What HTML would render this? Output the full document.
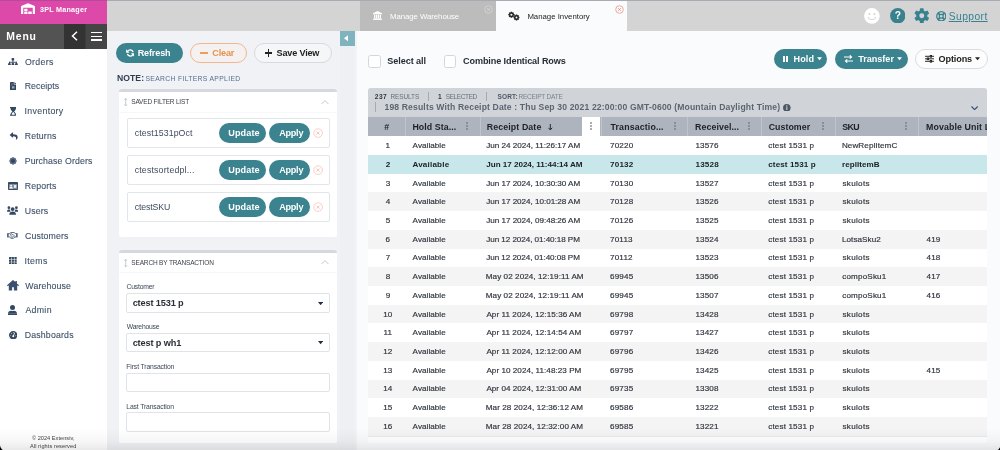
<!DOCTYPE html>
<html><head><meta charset="utf-8"><title>3PL Manager</title>
<style>
*{box-sizing:border-box;margin:0;padding:0}
html,body{width:1000px;height:450px;overflow:hidden;background:#fafbfc;font-family:"Liberation Sans",sans-serif;color:#3e4c5e}
body{position:relative}
#app{position:absolute;left:0;top:0;width:1000px;height:450px;overflow:hidden;will-change:transform;transform:translateZ(0)}
.abs,.abs-c>*{position:absolute}
div.abs{display:block}
.pill{position:absolute;border-radius:10px}
.teal{background:#3a838f}
.panel{position:absolute;left:119.4px;width:217.2px;background:#fff;border-top:3px solid #d5d9df;border-radius:3px 3px 2px 2px}
.card{position:absolute;left:127px;width:202.6px;height:30px;border:1px solid #e2e5e9;border-radius:2px;background:#fff}
.inp{position:absolute;left:126.4px;width:203.2px;height:19.4px;border:1px solid #e0e3e7;border-radius:2px;background:#fff}
.cb{position:absolute;top:55.3px;width:12.5px;height:12.5px;border:1px solid #d3d6db;border-radius:2.5px;background:#fff}
.row{position:absolute;left:368px;width:618.6px;height:18.71px}
.hs{position:absolute;top:117px;width:1px;height:19.3px;background:#bec5ce}
</style></head><body>
<div id="app">
<div class="abs" style="left:107px;top:0px;width:893px;height:30.7px;background:#d4d4d4;border-top:1px solid #a6abb2"></div>
<div class="abs" style="left:359.8px;top:1px;width:136.4px;height:29.7px;background:#bcbcbc;"></div>
<svg class="abs" style="left:373px;top:11.2px;width:9px;height:9px" viewBox="0 0 22 22"><g fill="#fff"><path d="M11 0L0 5.500V8h22V5.500z"/><rect x="2.500" y="9" width="3.200" height="8"/><rect x="7.200" y="9" width="3.200" height="8"/><rect x="11.700" y="9" width="3.200" height="8"/><rect x="16.300" y="9" width="3.200" height="8"/><rect x="1.500" y="17.500" width="19" height="1.800"/><rect x="0" y="19.800" width="22" height="2.200"/></g></svg>
<div class="abs" style="left:390.08px;top:13.00px;font-size:7.8px;line-height:1;letter-spacing:-0.059px;color:#fff;white-space:nowrap;">Manage Warehouse</div>
<svg class="abs" style="left:484.0px;top:4.800000000000001px;width:9.0px;height:9.0px" viewBox="0 0 18 18"><circle cx="9" cy="9" r="7.600" fill="none" stroke="#dcdcdc" stroke-width="1.300"/><path d="M6.300 6.300l5.400 5.400M11.700 6.300l-5.400 5.400" stroke="#dcdcdc" stroke-width="1.500"/></svg>
<div class="abs" style="left:496.2px;top:1px;width:130.6px;height:30px;background:#fafbfc;"></div>
<svg class="abs" style="left:508px;top:10.5px;width:12px;height:10px" viewBox="0 0 24 20"><g fill="#222"><circle cx="6.8" cy="7.5" r="4.44"/><rect x="5.18" y="1.50" width="3.24" height="12.00" rx="0.48" transform="rotate(0 6.8 7.5)"/><rect x="5.18" y="1.50" width="3.24" height="12.00" rx="0.48" transform="rotate(45 6.8 7.5)"/><rect x="5.18" y="1.50" width="3.24" height="12.00" rx="0.48" transform="rotate(90 6.8 7.5)"/><rect x="5.18" y="1.50" width="3.24" height="12.00" rx="0.48" transform="rotate(135 6.8 7.5)"/></g><circle cx="6.8" cy="7.5" r="2.1" fill="#fafbfc"/><g fill="#222"><circle cx="17" cy="13" r="4.29"/><rect x="15.43" y="7.20" width="3.13" height="11.60" rx="0.46" transform="rotate(0 17 13)"/><rect x="15.43" y="7.20" width="3.13" height="11.60" rx="0.46" transform="rotate(45 17 13)"/><rect x="15.43" y="7.20" width="3.13" height="11.60" rx="0.46" transform="rotate(90 17 13)"/><rect x="15.43" y="7.20" width="3.13" height="11.60" rx="0.46" transform="rotate(135 17 13)"/></g><circle cx="17" cy="13" r="2" fill="#fafbfc"/></svg>
<div class="abs" style="left:527.38px;top:13.00px;font-size:7.8px;line-height:1;letter-spacing:-0.004px;color:#222;white-space:nowrap;">Manage Inventory</div>
<svg class="abs" style="left:615.25px;top:4.800000000000001px;width:9.0px;height:9.0px" viewBox="0 0 18 18"><circle cx="9" cy="9" r="7.600" fill="none" stroke="#e2806f" stroke-width="1.300"/><path d="M6.300 6.300l5.400 5.400M11.700 6.300l-5.400 5.400" stroke="#e2806f" stroke-width="1.500"/></svg>
<svg class="abs" style="left:863.9px;top:7.9px;width:15.8px;height:15.8px" viewBox="0 0 32 32"><circle cx="16" cy="16" r="15.800" fill="#fff"/><circle cx="10.800" cy="12.300" r="2" fill="#d6d6d6"/><circle cx="21.200" cy="12.300" r="2" fill="#d6d6d6"/><path d="M8.500 19c3 5.800 12 5.800 15 0" fill="none" stroke="#d6d6d6" stroke-width="2.200" stroke-linecap="round"/></svg>
<svg class="abs" style="left:889.5px;top:7.5px;width:15.6px;height:15.6px" viewBox="0 0 32 32"><circle cx="16" cy="16" r="15.800" fill="#37828e"/><text x="16" y="23.300" text-anchor="middle" font-family="Liberation Sans, sans-serif" font-weight="bold" font-size="21" fill="#fff">?</text></svg>
<svg class="abs" style="left:913.9px;top:7.5px;width:15.6px;height:15.6px" viewBox="0 0 32 32"><g fill="#37828e"><circle cx="16" cy="16" r="11.500"/><rect x="12" y="0.600" width="8" height="30.800" rx="1.600"/><rect x="12" y="0.600" width="8" height="30.800" rx="1.600" transform="rotate(60 16 16)"/><rect x="12" y="0.600" width="8" height="30.800" rx="1.600" transform="rotate(120 16 16)"/></g><circle cx="16" cy="16" r="5.100" fill="#d4d4d4"/></svg>
<svg class="abs" style="left:935.6px;top:10.7px;width:10.5px;height:10.5px" viewBox="0 0 20 20"><circle cx="10" cy="10" r="8.600" fill="none" stroke="#37828e" stroke-width="2.400"/><circle cx="10" cy="10" r="3.700" fill="none" stroke="#37828e" stroke-width="2.200"/><path d="M3.600 3.600l3.800 3.800M16.400 3.600l-3.800 3.800M3.600 16.400l3.800-3.800M16.400 16.400l-3.800-3.800" stroke="#37828e" stroke-width="3.400"/></svg>
<div class="abs" style="left:948.74px;top:12.00px;font-size:10.3px;line-height:1;letter-spacing:0.411px;color:#37828e;white-space:nowrap;text-decoration:underline;text-decoration-thickness:.8px;text-underline-offset:1px;">Support</div>
<div class="abs" style="left:0px;top:0px;width:107px;height:450px;background:#fff;"></div>
<div class="abs" style="left:0px;top:0px;width:106.7px;height:24px;background:#dc49a9;border-top:1px solid #b24c98"></div>
<svg class="abs" style="left:20.8px;top:3.4px;width:14px;height:11px" viewBox="0 0 28 22"><path fill="#fff" d="M14 0.500L1.500 5.500C.6 5.900 0 6.700 0 7.700V22h4.500V9.500h19V22H28V7.700c0-1-.6-1.800-1.500-2.200z"/><g fill="#fff"><rect x="6.500" y="11.500" width="6.500" height="4.500" rx=".6"/><rect x="6.500" y="17" width="6.500" height="5" rx=".6"/><rect x="14.500" y="17" width="7" height="5" rx=".6"/></g></svg>
<div class="abs" style="left:40.01px;top:6.00px;font-size:7.2px;line-height:1;letter-spacing:0.238px;color:#fff;white-space:nowrap;font-weight:bold;">3PL Manager</div>
<div class="abs" style="left:0px;top:24px;width:106.7px;height:24.6px;background:#535353;"></div>
<div class="abs" style="left:6.22px;top:32.00px;font-size:10.4px;line-height:1;letter-spacing:0.869px;color:#fff;white-space:nowrap;font-weight:bold;">Menu</div>
<div class="abs" style="left:64px;top:24px;width:21px;height:24.6px;background:#333;"></div>
<svg class="abs" style="left:70.6px;top:31.2px;width:7px;height:10px" viewBox="0 0 14 20"><path d="M12 1.500L3 10l9 8.500" fill="none" stroke="#fff" stroke-width="3"/></svg>
<div class="abs" style="left:85px;top:24px;width:21.7px;height:24.6px;background:#454545;border-left:1px solid #3b3b3b"></div>
<div class="abs" style="left:91.1px;top:31.8px;width:10.6px;height:1.4px;background:#fff;"></div>
<div class="abs" style="left:91.1px;top:35.6px;width:10.6px;height:1.4px;background:#fff;"></div>
<div class="abs" style="left:91.1px;top:39.3px;width:10.6px;height:1.4px;background:#fff;"></div>
<div class="abs" style="left:25.01px;top:58.00px;font-size:8.75px;line-height:1;letter-spacing:0.314px;color:#3d5068;white-space:nowrap;-webkit-text-stroke:.1px;">Orders</div>
<div class="abs" style="left:24.70px;top:82.00px;font-size:8.75px;line-height:1;letter-spacing:0.053px;color:#3d5068;white-space:nowrap;-webkit-text-stroke:.1px;">Receipts</div>
<div class="abs" style="left:24.61px;top:107.00px;font-size:8.75px;line-height:1;letter-spacing:0.323px;color:#3d5068;white-space:nowrap;-webkit-text-stroke:.1px;">Inventory</div>
<div class="abs" style="left:24.70px;top:132.00px;font-size:8.75px;line-height:1;letter-spacing:0.164px;color:#3d5068;white-space:nowrap;-webkit-text-stroke:.1px;">Returns</div>
<div class="abs" style="left:24.70px;top:157.00px;font-size:8.75px;line-height:1;letter-spacing:0.104px;color:#3d5068;white-space:nowrap;-webkit-text-stroke:.1px;">Purchase Orders</div>
<div class="abs" style="left:24.70px;top:182.00px;font-size:8.75px;line-height:1;letter-spacing:0.164px;color:#3d5068;white-space:nowrap;-webkit-text-stroke:.1px;">Reports</div>
<div class="abs" style="left:24.74px;top:207.00px;font-size:8.75px;line-height:1;letter-spacing:0.131px;color:#3d5068;white-space:nowrap;-webkit-text-stroke:.1px;">Users</div>
<div class="abs" style="left:24.96px;top:232.00px;font-size:8.75px;line-height:1;letter-spacing:0.155px;color:#3d5068;white-space:nowrap;-webkit-text-stroke:.1px;">Customers</div>
<div class="abs" style="left:24.61px;top:257.00px;font-size:8.75px;line-height:1;letter-spacing:0.325px;color:#3d5068;white-space:nowrap;-webkit-text-stroke:.1px;">Items</div>
<div class="abs" style="left:25.36px;top:282.00px;font-size:8.75px;line-height:1;letter-spacing:0.148px;color:#3d5068;white-space:nowrap;-webkit-text-stroke:.1px;">Warehouse</div>
<div class="abs" style="left:25.40px;top:306.00px;font-size:8.75px;line-height:1;letter-spacing:0.330px;color:#3d5068;white-space:nowrap;-webkit-text-stroke:.1px;">Admin</div>
<div class="abs" style="left:24.70px;top:331.00px;font-size:8.75px;line-height:1;letter-spacing:0.183px;color:#3d5068;white-space:nowrap;-webkit-text-stroke:.1px;">Dashboards</div>
<svg class="abs" style="left:8px;top:57.6px;width:9.8px;height:7.7px" viewBox="0 0 9.800 7.700"><g fill="#33475f"><rect x="3.600" y="0" width="2.600" height="2.600" rx=".7"/><circle cx="1.400" cy="6.300" r="1.400"/><circle cx="4.900" cy="6.300" r="1.400"/><circle cx="8.400" cy="6.300" r="1.400"/><rect x="4.450" y="2" width=".9" height="4"/><rect x=".95" y="3.800" width="7.900" height=".9"/><rect x=".95" y="3.800" width=".9" height="2"/><rect x="7.950" y="3.800" width=".9" height="2"/></g></svg>
<svg class="abs" style="left:9.6px;top:82px;width:6.4px;height:8.4px" viewBox="0 0 6.400 8.400"><path fill="#33475f" d="M0 .8A.8.8 0 0 1 .8 0H3.800V2.600H6.400V7.600A.8.8 0 0 1 5.600 8.400H.8A.8.8 0 0 1 0 7.600z M4.400 0L6.400 2H4.400z"/><rect x="1.900" y="4.300" width="2.600" height="2.200" fill="#9ca7b5"/><rect x="1.200" y="1.600" width="1.600" height=".6" fill="#8492a3"/><rect x="1.200" y="2.800" width="1.600" height=".6" fill="#8492a3"/></svg>
<svg class="abs" style="left:9.5px;top:107px;width:6.5px;height:8.8px" viewBox="0 0 6.500 8.800"><path fill="#33475f" d="M0 0h6.500v1.100h-.5c0 1.500-.9 2.500-1.900 3.300 1 .8 1.900 1.800 1.900 3.300h.5v1.100H0v-1.100h.5c0-1.500.9-2.500 1.900-3.300C1.400 3.600.5 2.600.5 1.100H0z"/><path fill="#fff" d="M1.700 7.700c0-1.100.7-1.900 1.550-2.600.85.700 1.550 1.500 1.550 2.600z"/></svg>
<svg class="abs" style="left:8.5px;top:131.9px;width:9.2px;height:8.2px" viewBox="0 0 512 512"><path fill="#33475f" d="M8.309 189.836L184.313 37.851C199.719 24.546 224 35.347 224 56.015v80.053c160.629 1.839 288 34.032 288 186.258 0 61.441-39.581 122.309-83.333 154.132-13.653 9.931-33.111-2.533-28.077-18.631 45.344-145.012-21.507-183.510-176.590-185.742V320c0 20.700-24.300 31.453-39.687 18.164l-176.004-152c-11.071-9.562-11.086-26.753 0-36.328z"/></svg>
<svg class="abs" style="left:8.8px;top:157px;width:8px;height:7.9px" viewBox="0 0 8 8"><polygon fill="#5d6e86" points="4.00,0.00 5.32,0.81 6.83,1.17 7.19,2.68 8.00,4.00 7.19,5.32 6.83,6.83 5.32,7.19 4.00,8.00 2.68,7.19 1.17,6.83 0.81,5.32 0.00,4.00 0.81,2.68 1.17,1.17 2.68,0.81"/><circle cx="4" cy="4" r="2" fill="#33475f"/></svg>
<svg class="abs" style="left:8px;top:181.8px;width:10px;height:8px" viewBox="0 0 10 8"><rect x="0" y="0" width="10" height="8" rx=".9" fill="#33475f"/><rect x=".9" y="2" width="8.200" height="5.100" fill="#7d8b9e"/><g fill="#fff"><circle cx="3.100" cy="3.700" r=".95"/><path d="M1.400 6.400c0-1.100.7-1.500 1.700-1.500s1.700.4 1.700 1.500z"/><rect x="5.900" y="3" width="2.400" height="2.900" fill="#e8ebef"/></g></svg>
<svg class="abs" style="left:7.2px;top:206px;width:11.3px;height:8.8px" viewBox="0 0 11.300 8.800"><g fill="#33475f"><circle cx="5.650" cy="3.100" r="1.900"/><path d="M2.300 8.800c0-2.400 1.400-3.300 3.350-3.300s3.350.9 3.350 3.300z"/><circle cx="1.900" cy="1.700" r="1.350"/><circle cx="9.400" cy="1.700" r="1.350"/><path d="M0 5.800c0-1.700.9-2.300 2-2.300.5 0 .9.100 1.300.4-.3.900.1 1.500.5 1.900z"/><path d="M11.300 5.800c0-1.700-.9-2.300-2-2.300-.5 0-.9.100-1.300.4.300.9-.1 1.500-.5 1.900z"/></g></svg>
<svg class="abs" style="left:7.2px;top:232.2px;width:10.8px;height:6.8px" viewBox="0 0 10.800 6.800"><g fill="none" stroke="#4a5c77" stroke-width=".9" stroke-linejoin="round"><path d="M1.500 1.500h1.300l1.200-1h3l1.300 1h1.200M1.500 5h1l1.500 1.300h2.400l1.500-1.300h1.200"/><path d="M4.500 1.200l-1.300 1.500c.5.800 1.400.600 1.900-.1h1.100l2 2.100M3.600 4.300c.8 1 2.200 1.100 3.100.2"/></g><rect x=".2" y="1.200" width="1.400" height="4.200" fill="#33475f"/><rect x="9.200" y="1.200" width="1.400" height="4.200" fill="#33475f"/></svg>
<svg class="abs" style="left:9px;top:256.8px;width:7.8px;height:7.3px" viewBox="0 0 7.800 7.300"><g fill="#33475f"><rect x="0.00" y="0.00" width="2.200" height="2.050" rx=".25"/><rect x="0.00" y="2.60" width="2.200" height="2.050" rx=".25"/><rect x="0.00" y="5.20" width="2.200" height="2.050" rx=".25"/><rect x="2.75" y="0.00" width="2.200" height="2.050" rx=".25"/><rect x="2.75" y="2.60" width="2.200" height="2.050" rx=".25"/><rect x="2.75" y="5.20" width="2.200" height="2.050" rx=".25"/><rect x="5.50" y="0.00" width="2.200" height="2.050" rx=".25"/><rect x="5.50" y="2.60" width="2.200" height="2.050" rx=".25"/><rect x="5.50" y="5.20" width="2.200" height="2.050" rx=".25"/></g></svg>
<svg class="abs" style="left:6.8px;top:280px;width:12px;height:10.5px" viewBox="0 0 12 10.500"><path fill="#3b4f6e" d="M6 0L0 5.200l.8.950 1-.85V10.500h3.300V7.200h1.800v3.300h3.300V5.300l1 .85.800-.95L9.900 3.400V.9H8.400v1.200z"/></svg>
<svg class="abs" style="left:8.2px;top:304.8px;width:9px;height:10px" viewBox="0 0 9 10"><g fill="#33475f"><circle cx="4.500" cy="2.500" r="2.500"/><path d="M0 10v-1.300c0-1.700 1.300-3 3-3h.4c.7.350 1.500.350 2.200 0H6c1.700 0 3 1.300 3 3V10z"/></g><rect x="0" y="8.300" width="9" height=".5" fill="#7d8b9e"/></svg>
<svg class="abs" style="left:8.5px;top:330.8px;width:8.5px;height:8.4px" viewBox="0 0 8.500 8.500"><circle cx="4.250" cy="4.250" r="4.250" fill="#33475f"/><g fill="#fff"><circle cx="4.250" cy="5.300" r="1"/><path d="M3.800 5.200l1.500-3.600.7.300-1.400 3.600z"/><circle cx="1.700" cy="4.700" r=".5"/><circle cx="2.400" cy="2.500" r=".5"/><circle cx="4.250" cy="1.600" r=".5"/><circle cx="6.800" cy="4.700" r=".5"/></g></svg>
<div class="abs" style="left:31.92px;top:436.00px;font-size:5.6px;line-height:1;letter-spacing:0.039px;color:#3f3f3f;white-space:nowrap;">© 2024 Extensiv,</div>
<div class="abs" style="left:30.00px;top:444.00px;font-size:5.6px;line-height:1;letter-spacing:0.085px;color:#3f3f3f;white-space:nowrap;">All rights reserved</div>
<div class="abs" style="left:107px;top:30.7px;width:233px;height:420px;background:#f0f2f5;"></div>
<div class="abs" style="left:340px;top:30.7px;width:15px;height:420px;background:#eef0f3;"></div>
<div class="abs" style="left:340px;top:30.7px;width:15px;height:15.5px;background:#7fb4be;"></div>
<svg class="abs" style="left:344.3px;top:35.3px;width:4.2px;height:6.6px" viewBox="0 0 4 6"><path d="M4 0v6L0 3z" fill="#fff"/></svg>
<div class="pill teal" style="left:116px;top:43.100px;width:67px;height:19.800px"></div>
<svg class="abs" style="left:125.5px;top:49px;width:8.5px;height:8px" viewBox="0 0 17 16"><g fill="none" stroke="#fff" stroke-width="2.900"><path d="M14.200 6.200A6 6 0 0 0 3.600 4.200"/><path d="M2.800 9.800A6 6 0 0 0 13.400 11.800"/></g><path d="M0.300 0.300v7h7z" fill="#fff"/><path d="M16.700 15.700v-7h-7z" fill="#fff"/></svg>
<div class="abs" style="left:137.66px;top:49.00px;font-size:9.1px;line-height:1;letter-spacing:-0.152px;color:#fff;white-space:nowrap;font-weight:bold;">Refresh</div>
<div class="pill" style="left:190.200px;top:43.100px;width:57.200px;height:19.800px;border:1px solid #f0b78c;background:#f4f1f0"></div>
<div class="abs" style="left:200.2px;top:52.3px;width:7.8px;height:1.4px;background:#ec9c5c;"></div>
<div class="abs" style="left:212.34px;top:49.00px;font-size:9.1px;line-height:1;letter-spacing:-0.175px;color:#e8924d;white-space:nowrap;font-weight:bold;">Clear</div>
<div class="pill" style="left:254.400px;top:43.100px;width:77.500px;height:19.800px;border:1px solid #d6d9dd;background:#f5f6f8"></div>
<div class="abs" style="left:264.9px;top:52.4px;width:7.3px;height:1.4px;background:#222;"></div>
<div class="abs" style="left:267.85px;top:49.4px;width:1.4px;height:7.4px;background:#222;"></div>
<div class="abs" style="left:276.53px;top:49.00px;font-size:9.1px;line-height:1;letter-spacing:-0.174px;color:#222;white-space:nowrap;font-weight:bold;">Save View</div>
<div class="abs" style="left:117.04px;top:74.00px;font-size:8.6px;line-height:1;letter-spacing:0.059px;color:#2f3d50;white-space:nowrap;font-weight:bold;">NOTE:</div>
<div class="abs" style="left:145.44px;top:76.00px;font-size:6.8px;line-height:1;letter-spacing:0.326px;color:#54708f;white-space:nowrap;">SEARCH FILTERS APPLIED</div>
<div class="panel" style="top:89.400px;height:147.200px"></div>
<svg class="abs" style="left:124.2px;top:97.9px;width:3.4px;height:8.4px" viewBox="0 0 8 20"><path d="M4 1v18M1 4.500l3-3.500 3 3.500M1 15.500l3 3.500 3-3.500" fill="none" stroke="#bcc1c7" stroke-width="2"/></svg>
<div class="abs" style="left:131.31px;top:99.00px;font-size:6.5px;line-height:1;letter-spacing:-0.187px;color:#3a3f47;white-space:nowrap;">SAVED FILTER LIST</div>
<svg class="abs" style="left:321px;top:99.7px;width:8px;height:4.6px" viewBox="0 0 16 9"><path d="M1 8.200l7-7 7 7" fill="none" stroke="#bec3ca" stroke-width="1.800"/></svg>
<div class="abs" style="left:119.4px;top:111.7px;width:217.2px;height:1px;background:#f6f7f9;"></div>
<div class="card" style="top:118.2px"></div>
<div class="abs" style="left:134.65px;top:129.00px;font-size:8.75px;line-height:1;letter-spacing:0.117px;color:#3e4a5c;white-space:nowrap;">ctest1531pOct</div>
<div class="pill teal" style="left:218.800px;top:122.7px;width:47.400px;height:20px"></div>
<div class="abs" style="left:228.25px;top:129.00px;font-size:9.1px;line-height:1;letter-spacing:0.114px;color:#fff;white-space:nowrap;font-weight:bold;">Update</div>
<div class="pill teal" style="left:269.200px;top:122.7px;width:40.900px;height:20px"></div>
<div class="abs" style="left:279.17px;top:129.00px;font-size:9.1px;line-height:1;letter-spacing:-0.245px;color:#fff;white-space:nowrap;font-weight:bold;">Apply</div>
<svg class="abs" style="left:312.7px;top:128.4px;width:10.2px;height:10.2px" viewBox="0 0 18 18"><circle cx="9" cy="9" r="7.600" fill="none" stroke="#f5bdb3" stroke-width="1.300"/><path d="M6.300 6.300l5.400 5.400M11.700 6.300l-5.400 5.400" stroke="#f5bdb3" stroke-width="1.500"/></svg>
<div class="card" style="top:155.2px"></div>
<div class="abs" style="left:134.65px;top:166.00px;font-size:8.75px;line-height:1;letter-spacing:0.188px;color:#3e4a5c;white-space:nowrap;">ctestsortedpl...</div>
<div class="pill teal" style="left:218.800px;top:159.7px;width:47.400px;height:20px"></div>
<div class="abs" style="left:228.25px;top:166.00px;font-size:9.1px;line-height:1;letter-spacing:0.114px;color:#fff;white-space:nowrap;font-weight:bold;">Update</div>
<div class="pill teal" style="left:269.200px;top:159.7px;width:40.900px;height:20px"></div>
<div class="abs" style="left:279.17px;top:166.00px;font-size:9.1px;line-height:1;letter-spacing:-0.245px;color:#fff;white-space:nowrap;font-weight:bold;">Apply</div>
<svg class="abs" style="left:312.7px;top:165.4px;width:10.2px;height:10.2px" viewBox="0 0 18 18"><circle cx="9" cy="9" r="7.600" fill="none" stroke="#f5bdb3" stroke-width="1.300"/><path d="M6.300 6.300l5.400 5.400M11.700 6.300l-5.400 5.400" stroke="#f5bdb3" stroke-width="1.500"/></svg>
<div class="card" style="top:192.2px"></div>
<div class="abs" style="left:134.65px;top:203.00px;font-size:8.75px;line-height:1;letter-spacing:-0.120px;color:#3e4a5c;white-space:nowrap;">ctestSKU</div>
<div class="pill teal" style="left:218.800px;top:196.7px;width:47.400px;height:20px"></div>
<div class="abs" style="left:228.25px;top:203.00px;font-size:9.1px;line-height:1;letter-spacing:0.114px;color:#fff;white-space:nowrap;font-weight:bold;">Update</div>
<div class="pill teal" style="left:269.200px;top:196.7px;width:40.900px;height:20px"></div>
<div class="abs" style="left:279.17px;top:203.00px;font-size:9.1px;line-height:1;letter-spacing:-0.245px;color:#fff;white-space:nowrap;font-weight:bold;">Apply</div>
<svg class="abs" style="left:312.7px;top:202.4px;width:10.2px;height:10.2px" viewBox="0 0 18 18"><circle cx="9" cy="9" r="7.600" fill="none" stroke="#f5bdb3" stroke-width="1.300"/><path d="M6.300 6.300l5.400 5.400M11.700 6.300l-5.400 5.400" stroke="#f5bdb3" stroke-width="1.500"/></svg>
<div class="panel" style="top:250px;height:193px"></div>
<svg class="abs" style="left:124.2px;top:258.5px;width:3.4px;height:8.4px" viewBox="0 0 8 20"><path d="M4 1v18M1 4.500l3-3.500 3 3.500M1 15.500l3 3.500 3-3.500" fill="none" stroke="#bcc1c7" stroke-width="2"/></svg>
<div class="abs" style="left:131.31px;top:260.00px;font-size:6.5px;line-height:1;letter-spacing:-0.154px;color:#3a3f47;white-space:nowrap;">SEARCH BY TRANSACTION</div>
<svg class="abs" style="left:321px;top:260.3px;width:8px;height:4.6px" viewBox="0 0 16 9"><path d="M1 8.200l7-7 7 7" fill="none" stroke="#bec3ca" stroke-width="1.800"/></svg>
<div class="abs" style="left:119.4px;top:272.3px;width:217.2px;height:1px;background:#f6f7f9;"></div>
<div class="abs" style="left:126.56px;top:284.00px;font-size:6.8px;line-height:1;letter-spacing:-0.219px;color:#3a4656;white-space:nowrap;">Customer</div>
<div class="inp" style="top:293.2px"></div>
<div class="abs" style="left:132.63px;top:299.00px;font-size:9.2px;line-height:1;letter-spacing:-0.139px;color:#2b2f36;white-space:nowrap;font-weight:bold;">ctest 1531 p</div>
<svg class="abs" style="left:317.5px;top:301.5px;width:5.2px;height:3.3px" viewBox="0 0 10 6"><path d="M0 0h10L5 6z" fill="#1e2f4a"/></svg>
<div class="abs" style="left:126.87px;top:324.00px;font-size:6.8px;line-height:1;letter-spacing:-0.238px;color:#3a4656;white-space:nowrap;">Warehouse</div>
<div class="inp" style="top:332.95px"></div>
<div class="abs" style="left:132.63px;top:339.00px;font-size:9.2px;line-height:1;letter-spacing:-0.130px;color:#2b2f36;white-space:nowrap;font-weight:bold;">ctest p wh1</div>
<svg class="abs" style="left:317.5px;top:341.25px;width:5.2px;height:3.3px" viewBox="0 0 10 6"><path d="M0 0h10L5 6z" fill="#1e2f4a"/></svg>
<div class="abs" style="left:126.36px;top:364.00px;font-size:6.8px;line-height:1;letter-spacing:-0.138px;color:#3a4656;white-space:nowrap;">First Transaction</div>
<div class="inp" style="top:372.7px"></div>
<div class="abs" style="left:126.36px;top:404.00px;font-size:6.8px;line-height:1;letter-spacing:-0.148px;color:#3a4656;white-space:nowrap;">Last Transaction</div>
<div class="inp" style="top:412.45px"></div>
<div class="abs" style="left:355px;top:30.7px;width:1.6px;height:420px;background:#f1f3f5;"></div>
<div class="cb" style="left:368px"></div>
<div class="abs" style="left:387.33px;top:57.00px;font-size:9.1px;line-height:1;letter-spacing:-0.087px;color:#272d36;white-space:nowrap;font-weight:bold;">Select all</div>
<div class="cb" style="left:443.600px"></div>
<div class="abs" style="left:463.04px;top:57.00px;font-size:9.1px;line-height:1;letter-spacing:-0.111px;color:#272d36;white-space:nowrap;font-weight:bold;">Combine Identical Rows</div>
<div class="pill teal" style="left:773.700px;top:49.400px;width:53.800px;height:19.400px"></div>
<div class="abs" style="left:782.9px;top:56px;width:1.9px;height:6px;background:#fff;"></div>
<div class="abs" style="left:786.3px;top:56px;width:1.9px;height:6px;background:#fff;"></div>
<div class="abs" style="left:793.51px;top:55.00px;font-size:9.1px;line-height:1;letter-spacing:0.094px;color:#fff;white-space:nowrap;font-weight:bold;">Hold</div>
<svg class="abs" style="left:816.5px;top:57.4px;width:5.2px;height:3.4px" viewBox="0 0 10 6"><path d="M0 0h10L5 6z" fill="#fff"/></svg>
<div class="pill teal" style="left:834.800px;top:49.400px;width:73.100px;height:19.400px"></div>
<svg class="abs" style="left:843.7px;top:55px;width:9px;height:8px" viewBox="0 0 18 16"><path d="M0 4h15M11.500 0.800L15 4l-3.500 3.200M18 12H3M6.500 8.800L3 12l3.500 3.200" fill="none" stroke="#fff" stroke-width="2.400"/></svg>
<div class="abs" style="left:858.21px;top:55.00px;font-size:9.1px;line-height:1;letter-spacing:-0.025px;color:#fff;white-space:nowrap;font-weight:bold;">Transfer</div>
<svg class="abs" style="left:896.7px;top:57.4px;width:5.2px;height:3.4px" viewBox="0 0 10 6"><path d="M0 0h10L5 6z" fill="#fff"/></svg>
<div class="pill" style="left:915.400px;top:49.400px;width:72.400px;height:19.400px;border:1px solid #d8dbdf;background:#fdfdfd"></div>
<svg class="abs" style="left:924.8px;top:55.2px;width:9px;height:7.6px" viewBox="0 0 18 15"><g stroke="#222" stroke-width="1.900" fill="#fdfdfd"><path d="M0 2.500h18M0 7.500h18M0 12.500h18"/><rect x="10.500" y="0.800" width="2.600" height="3.400"/><rect x="4.500" y="5.800" width="2.600" height="3.400"/><rect x="10.500" y="10.800" width="2.600" height="3.400"/></g></svg>
<div class="abs" style="left:938.54px;top:55.00px;font-size:9.1px;line-height:1;letter-spacing:-0.121px;color:#222;white-space:nowrap;font-weight:bold;">Options</div>
<svg class="abs" style="left:975px;top:57.4px;width:5.2px;height:3.4px" viewBox="0 0 10 6"><path d="M0 0h10L5 6z" fill="#222"/></svg>
<div class="abs" style="left:368px;top:88px;width:619.4px;height:29.2px;background:#d0d4d9;border-radius:2.500px 2.500px 0 0"></div>
<div class="abs" style="left:374.77px;top:94.00px;font-size:6.6px;line-height:1;letter-spacing:0.453px;color:#2e3945;white-space:nowrap;font-weight:bold;">237</div>
<div class="abs" style="left:390.48px;top:94.00px;font-size:6.5px;line-height:1;letter-spacing:-0.111px;color:#66707b;white-space:nowrap;">RESULTS</div>
<div class="abs" style="left:428px;top:92.4px;width:1px;height:8.2px;background:#a4abb3;"></div>
<div class="abs" style="left:438.00px;top:94.00px;font-size:6.6px;line-height:1;letter-spacing:0.000px;color:#2e3945;white-space:nowrap;font-weight:bold;">1</div>
<div class="abs" style="left:445.71px;top:94.00px;font-size:6.5px;line-height:1;letter-spacing:-0.386px;color:#66707b;white-space:nowrap;">SELECTED</div>
<div class="abs" style="left:486.2px;top:92.4px;width:1px;height:8.2px;background:#a4abb3;"></div>
<div class="abs" style="left:497.61px;top:94.00px;font-size:6.5px;line-height:1;letter-spacing:0.128px;color:#4d5863;white-space:nowrap;font-weight:bold;">SORT:</div>
<div class="abs" style="left:518.48px;top:94.00px;font-size:6.5px;line-height:1;letter-spacing:-0.220px;color:#7a838d;white-space:nowrap;">RECEIPT DATE</div>
<div class="abs" style="left:375px;top:102px;width:1px;height:10.4px;background:#a4abb3;"></div>
<div class="abs" style="left:384.48px;top:103.00px;font-size:8.6px;line-height:1;letter-spacing:0.144px;color:#5b6570;white-space:nowrap;font-weight:bold;">198 Results With Receipt Date : Thu Sep 30 2021 22:00:00 GMT-0600 (Mountain Daylight Time)</div>
<svg class="abs" style="left:783px;top:103.6px;width:7.6px;height:7.6px" viewBox="0 0 16 16"><circle cx="8" cy="8" r="8" fill="#4e5863"/><rect x="6.900" y="6.800" width="2.300" height="5.600" fill="#d0d4d9"/><circle cx="8.050" cy="4.200" r="1.400" fill="#d0d4d9"/></svg>
<svg class="abs" style="left:971.4px;top:105.6px;width:7.2px;height:4.4px" viewBox="0 0 14 8.500"><path d="M1 1l6 6 6-6" fill="none" stroke="#34507e" stroke-width="2.300"/></svg>
<div class="abs" style="left:368px;top:117px;width:619.4px;height:19.3px;background:#adb4be;"></div>
<div class="hs" style="left:405.4px"></div>
<div class="hs" style="left:479.5px"></div>
<div class="hs" style="left:601px"></div>
<div class="hs" style="left:687px"></div>
<div class="hs" style="left:761.4px"></div>
<div class="hs" style="left:835px"></div>
<div class="hs" style="left:918px"></div>
<div class="abs" style="left:582px;top:117px;width:18.2px;height:19.3px;background:#fff;"></div>
<div class="abs" style="left:384.27px;top:123.00px;font-size:8.8px;line-height:1;letter-spacing:0.000px;color:#1d2127;white-space:nowrap;font-weight:bold;">#</div>
<div class="abs" style="left:412.43px;top:123.00px;font-size:8.8px;line-height:1;letter-spacing:0.076px;color:#1d2127;white-space:nowrap;font-weight:bold;">Hold Sta...</div>
<svg class="abs" style="left:466.4px;top:122.2px;width:2px;height:8px" viewBox="0 0 4 16"><g fill="#4d5763"><circle cx="2" cy="1.800" r="1.500"/><circle cx="2" cy="8" r="1.500"/><circle cx="2" cy="14.200" r="1.500"/></g></svg>
<div class="abs" style="left:486.83px;top:123.00px;font-size:8.8px;line-height:1;letter-spacing:0.105px;color:#1d2127;white-space:nowrap;font-weight:bold;">Receipt Date</div>
<svg class="abs" style="left:548.2px;top:123.8px;width:4.6px;height:6.4px" viewBox="0 0 9.200 12.800"><path d="M4.600 0v11.500M0.800 7.600L4.600 11.800l3.800-4.200" fill="none" stroke="#1d2127" stroke-width="1.900"/></svg>
<svg class="abs" style="left:589.7px;top:122.2px;width:2px;height:8px" viewBox="0 0 4 16"><g fill="#333"><circle cx="2" cy="1.800" r="1.500"/><circle cx="2" cy="8" r="1.500"/><circle cx="2" cy="14.200" r="1.500"/></g></svg>
<div class="abs" style="left:610.51px;top:123.00px;font-size:8.8px;line-height:1;letter-spacing:0.143px;color:#1d2127;white-space:nowrap;font-weight:bold;">Transactio...</div>
<svg class="abs" style="left:674.4px;top:122.2px;width:2px;height:8px" viewBox="0 0 4 16"><g fill="#4d5763"><circle cx="2" cy="1.800" r="1.500"/><circle cx="2" cy="8" r="1.500"/><circle cx="2" cy="14.200" r="1.500"/></g></svg>
<div class="abs" style="left:695.03px;top:123.00px;font-size:8.8px;line-height:1;letter-spacing:0.091px;color:#1d2127;white-space:nowrap;font-weight:bold;">Receivel...</div>
<svg class="abs" style="left:748px;top:122.2px;width:2px;height:8px" viewBox="0 0 4 16"><g fill="#4d5763"><circle cx="2" cy="1.800" r="1.500"/><circle cx="2" cy="8" r="1.500"/><circle cx="2" cy="14.200" r="1.500"/></g></svg>
<div class="abs" style="left:768.65px;top:123.00px;font-size:8.8px;line-height:1;letter-spacing:0.055px;color:#1d2127;white-space:nowrap;font-weight:bold;">Customer</div>
<svg class="abs" style="left:822px;top:122.2px;width:2px;height:8px" viewBox="0 0 4 16"><g fill="#4d5763"><circle cx="2" cy="1.800" r="1.500"/><circle cx="2" cy="8" r="1.500"/><circle cx="2" cy="14.200" r="1.500"/></g></svg>
<div class="abs" style="left:842.34px;top:123.00px;font-size:8.8px;line-height:1;letter-spacing:-0.688px;color:#1d2127;white-space:nowrap;font-weight:bold;">SKU</div>
<svg class="abs" style="left:905.4px;top:122.2px;width:2px;height:8px" viewBox="0 0 4 16"><g fill="#4d5763"><circle cx="2" cy="1.800" r="1.500"/><circle cx="2" cy="8" r="1.500"/><circle cx="2" cy="14.200" r="1.500"/></g></svg>
<div class="abs" style="left:918px;top:117px;width:69.400px;height:18.800px;overflow:hidden"><div class="abs" style="left:8.03px;top:6.00px;font-size:8.8px;line-height:1;letter-spacing:0.113px;color:#1d2127;white-space:nowrap;font-weight:bold;">Movable Unit L</div></div>
<div class="row" style="top:136.30px;background:#fff"></div>
<div class="abs" style="left:385.53px;top:142.00px;font-size:8.1px;line-height:1;letter-spacing:0.000px;color:#30353d;white-space:nowrap;-webkit-text-stroke:.18px;">1</div>
<div class="abs" style="left:412.60px;top:142.00px;font-size:8.1px;line-height:1;letter-spacing:0.049px;color:#30353d;white-space:nowrap;-webkit-text-stroke:.18px;">Available</div>
<div class="abs" style="left:486.28px;top:142.00px;font-size:8.1px;line-height:1;letter-spacing:0.000px;color:#30353d;white-space:nowrap;-webkit-text-stroke:.18px;">Jun 24 2024, 11:26:17 AM</div>
<div class="abs" style="left:610.00px;top:142.00px;font-size:8.1px;line-height:1;letter-spacing:0.164px;color:#30353d;white-space:nowrap;-webkit-text-stroke:.18px;">70220</div>
<div class="abs" style="left:695.39px;top:142.00px;font-size:8.1px;line-height:1;letter-spacing:0.162px;color:#30353d;white-space:nowrap;-webkit-text-stroke:.18px;">13576</div>
<div class="abs" style="left:768.28px;top:142.00px;font-size:8.1px;line-height:1;letter-spacing:0.142px;color:#30353d;white-space:nowrap;-webkit-text-stroke:.18px;">ctest 1531 p</div>
<div class="abs" style="left:841.95px;top:142.00px;font-size:8.1px;line-height:1;letter-spacing:0.082px;color:#30353d;white-space:nowrap;-webkit-text-stroke:.18px;">NewReplItemC</div>
<div class="row" style="top:155.01px;background:#c8e7ea"></div>
<div class="abs" style="left:385.67px;top:161.00px;font-size:8.1px;line-height:1;letter-spacing:0.000px;color:#1a1f26;white-space:nowrap;font-weight:bold;">2</div>
<div class="abs" style="left:412.40px;top:161.00px;font-size:8.1px;line-height:1;letter-spacing:0.196px;color:#1a1f26;white-space:nowrap;font-weight:bold;">Available</div>
<div class="abs" style="left:486.28px;top:161.00px;font-size:8.1px;line-height:1;letter-spacing:-0.029px;color:#1a1f26;white-space:nowrap;font-weight:bold;">Jun 17 2024, 11:44:14 AM</div>
<div class="abs" style="left:610.08px;top:161.00px;font-size:8.1px;line-height:1;letter-spacing:0.164px;color:#1a1f26;white-space:nowrap;font-weight:bold;">70132</div>
<div class="abs" style="left:695.51px;top:161.00px;font-size:8.1px;line-height:1;letter-spacing:0.163px;color:#1a1f26;white-space:nowrap;font-weight:bold;">13528</div>
<div class="abs" style="left:768.28px;top:161.00px;font-size:8.1px;line-height:1;letter-spacing:0.100px;color:#1a1f26;white-space:nowrap;font-weight:bold;">ctest 1531 p</div>
<div class="abs" style="left:842.07px;top:161.00px;font-size:8.1px;line-height:1;letter-spacing:0.039px;color:#1a1f26;white-space:nowrap;font-weight:bold;">replItemB</div>
<div class="row" style="top:173.72px;background:#fff"></div>
<div class="abs" style="left:385.67px;top:180.00px;font-size:8.1px;line-height:1;letter-spacing:0.000px;color:#30353d;white-space:nowrap;-webkit-text-stroke:.18px;">3</div>
<div class="abs" style="left:412.60px;top:180.00px;font-size:8.1px;line-height:1;letter-spacing:0.049px;color:#30353d;white-space:nowrap;-webkit-text-stroke:.18px;">Available</div>
<div class="abs" style="left:486.28px;top:180.00px;font-size:8.1px;line-height:1;letter-spacing:-0.026px;color:#30353d;white-space:nowrap;-webkit-text-stroke:.18px;">Jun 17 2024, 10:30:30 AM</div>
<div class="abs" style="left:610.00px;top:180.00px;font-size:8.1px;line-height:1;letter-spacing:0.164px;color:#30353d;white-space:nowrap;-webkit-text-stroke:.18px;">70130</div>
<div class="abs" style="left:695.39px;top:180.00px;font-size:8.1px;line-height:1;letter-spacing:0.161px;color:#30353d;white-space:nowrap;-webkit-text-stroke:.18px;">13527</div>
<div class="abs" style="left:768.28px;top:180.00px;font-size:8.1px;line-height:1;letter-spacing:0.142px;color:#30353d;white-space:nowrap;-webkit-text-stroke:.18px;">ctest 1531 p</div>
<div class="abs" style="left:842.40px;top:180.00px;font-size:8.1px;line-height:1;letter-spacing:0.333px;color:#30353d;white-space:nowrap;-webkit-text-stroke:.18px;">skulots</div>
<div class="row" style="top:192.43px;background:#f4f4f5"></div>
<div class="abs" style="left:385.67px;top:198.00px;font-size:8.1px;line-height:1;letter-spacing:0.000px;color:#30353d;white-space:nowrap;-webkit-text-stroke:.18px;">4</div>
<div class="abs" style="left:412.60px;top:198.00px;font-size:8.1px;line-height:1;letter-spacing:0.049px;color:#30353d;white-space:nowrap;-webkit-text-stroke:.18px;">Available</div>
<div class="abs" style="left:486.28px;top:198.00px;font-size:8.1px;line-height:1;letter-spacing:-0.026px;color:#30353d;white-space:nowrap;-webkit-text-stroke:.18px;">Jun 17 2024, 10:01:28 AM</div>
<div class="abs" style="left:610.00px;top:198.00px;font-size:8.1px;line-height:1;letter-spacing:0.163px;color:#30353d;white-space:nowrap;-webkit-text-stroke:.18px;">70128</div>
<div class="abs" style="left:695.39px;top:198.00px;font-size:8.1px;line-height:1;letter-spacing:0.162px;color:#30353d;white-space:nowrap;-webkit-text-stroke:.18px;">13526</div>
<div class="abs" style="left:768.28px;top:198.00px;font-size:8.1px;line-height:1;letter-spacing:0.142px;color:#30353d;white-space:nowrap;-webkit-text-stroke:.18px;">ctest 1531 p</div>
<div class="abs" style="left:842.40px;top:198.00px;font-size:8.1px;line-height:1;letter-spacing:0.333px;color:#30353d;white-space:nowrap;-webkit-text-stroke:.18px;">skulots</div>
<div class="row" style="top:211.14px;background:#fff"></div>
<div class="abs" style="left:385.65px;top:217.00px;font-size:8.1px;line-height:1;letter-spacing:0.000px;color:#30353d;white-space:nowrap;-webkit-text-stroke:.18px;">5</div>
<div class="abs" style="left:412.60px;top:217.00px;font-size:8.1px;line-height:1;letter-spacing:0.049px;color:#30353d;white-space:nowrap;-webkit-text-stroke:.18px;">Available</div>
<div class="abs" style="left:486.28px;top:217.00px;font-size:8.1px;line-height:1;letter-spacing:-0.026px;color:#30353d;white-space:nowrap;-webkit-text-stroke:.18px;">Jun 17 2024, 09:48:26 AM</div>
<div class="abs" style="left:610.00px;top:217.00px;font-size:8.1px;line-height:1;letter-spacing:0.163px;color:#30353d;white-space:nowrap;-webkit-text-stroke:.18px;">70126</div>
<div class="abs" style="left:695.39px;top:217.00px;font-size:8.1px;line-height:1;letter-spacing:0.162px;color:#30353d;white-space:nowrap;-webkit-text-stroke:.18px;">13525</div>
<div class="abs" style="left:768.28px;top:217.00px;font-size:8.1px;line-height:1;letter-spacing:0.142px;color:#30353d;white-space:nowrap;-webkit-text-stroke:.18px;">ctest 1531 p</div>
<div class="abs" style="left:842.40px;top:217.00px;font-size:8.1px;line-height:1;letter-spacing:0.333px;color:#30353d;white-space:nowrap;-webkit-text-stroke:.18px;">skulots</div>
<div class="row" style="top:229.85px;background:#f4f4f5"></div>
<div class="abs" style="left:385.61px;top:236.00px;font-size:8.1px;line-height:1;letter-spacing:0.000px;color:#30353d;white-space:nowrap;-webkit-text-stroke:.18px;">6</div>
<div class="abs" style="left:412.60px;top:236.00px;font-size:8.1px;line-height:1;letter-spacing:0.049px;color:#30353d;white-space:nowrap;-webkit-text-stroke:.18px;">Available</div>
<div class="abs" style="left:486.28px;top:236.00px;font-size:8.1px;line-height:1;letter-spacing:-0.058px;color:#30353d;white-space:nowrap;-webkit-text-stroke:.18px;">Jun 12 2024, 01:40:18 PM</div>
<div class="abs" style="left:610.00px;top:236.00px;font-size:8.1px;line-height:1;letter-spacing:0.159px;color:#30353d;white-space:nowrap;-webkit-text-stroke:.18px;">70113</div>
<div class="abs" style="left:695.39px;top:236.00px;font-size:8.1px;line-height:1;letter-spacing:0.163px;color:#30353d;white-space:nowrap;-webkit-text-stroke:.18px;">13524</div>
<div class="abs" style="left:768.28px;top:236.00px;font-size:8.1px;line-height:1;letter-spacing:0.142px;color:#30353d;white-space:nowrap;-webkit-text-stroke:.18px;">ctest 1531 p</div>
<div class="abs" style="left:841.95px;top:236.00px;font-size:8.1px;line-height:1;letter-spacing:0.073px;color:#30353d;white-space:nowrap;-webkit-text-stroke:.18px;">LotsaSku2</div>
<div class="abs" style="left:926.44px;top:236.00px;font-size:8.1px;line-height:1;letter-spacing:0.194px;color:#30353d;white-space:nowrap;-webkit-text-stroke:.18px;">419</div>
<div class="row" style="top:248.56px;background:#fff"></div>
<div class="abs" style="left:385.65px;top:254.00px;font-size:8.1px;line-height:1;letter-spacing:0.000px;color:#30353d;white-space:nowrap;-webkit-text-stroke:.18px;">7</div>
<div class="abs" style="left:412.60px;top:254.00px;font-size:8.1px;line-height:1;letter-spacing:0.049px;color:#30353d;white-space:nowrap;-webkit-text-stroke:.18px;">Available</div>
<div class="abs" style="left:486.28px;top:254.00px;font-size:8.1px;line-height:1;letter-spacing:-0.058px;color:#30353d;white-space:nowrap;-webkit-text-stroke:.18px;">Jun 12 2024, 01:40:08 PM</div>
<div class="abs" style="left:610.00px;top:254.00px;font-size:8.1px;line-height:1;letter-spacing:0.158px;color:#30353d;white-space:nowrap;-webkit-text-stroke:.18px;">70112</div>
<div class="abs" style="left:695.39px;top:254.00px;font-size:8.1px;line-height:1;letter-spacing:0.162px;color:#30353d;white-space:nowrap;-webkit-text-stroke:.18px;">13523</div>
<div class="abs" style="left:768.28px;top:254.00px;font-size:8.1px;line-height:1;letter-spacing:0.142px;color:#30353d;white-space:nowrap;-webkit-text-stroke:.18px;">ctest 1531 p</div>
<div class="abs" style="left:842.40px;top:254.00px;font-size:8.1px;line-height:1;letter-spacing:0.333px;color:#30353d;white-space:nowrap;-webkit-text-stroke:.18px;">skulots</div>
<div class="abs" style="left:926.44px;top:254.00px;font-size:8.1px;line-height:1;letter-spacing:0.195px;color:#30353d;white-space:nowrap;-webkit-text-stroke:.18px;">418</div>
<div class="row" style="top:267.27px;background:#f4f4f5"></div>
<div class="abs" style="left:385.65px;top:273.00px;font-size:8.1px;line-height:1;letter-spacing:0.000px;color:#30353d;white-space:nowrap;-webkit-text-stroke:.18px;">8</div>
<div class="abs" style="left:412.60px;top:273.00px;font-size:8.1px;line-height:1;letter-spacing:0.049px;color:#30353d;white-space:nowrap;-webkit-text-stroke:.18px;">Available</div>
<div class="abs" style="left:485.75px;top:273.00px;font-size:8.1px;line-height:1;letter-spacing:0.074px;color:#30353d;white-space:nowrap;-webkit-text-stroke:.18px;">May 02 2024, 12:19:11 AM</div>
<div class="abs" style="left:610.00px;top:273.00px;font-size:8.1px;line-height:1;letter-spacing:0.163px;color:#30353d;white-space:nowrap;-webkit-text-stroke:.18px;">69945</div>
<div class="abs" style="left:695.39px;top:273.00px;font-size:8.1px;line-height:1;letter-spacing:0.162px;color:#30353d;white-space:nowrap;-webkit-text-stroke:.18px;">13506</div>
<div class="abs" style="left:768.28px;top:273.00px;font-size:8.1px;line-height:1;letter-spacing:0.142px;color:#30353d;white-space:nowrap;-webkit-text-stroke:.18px;">ctest 1531 p</div>
<div class="abs" style="left:842.28px;top:273.00px;font-size:8.1px;line-height:1;letter-spacing:0.153px;color:#30353d;white-space:nowrap;-webkit-text-stroke:.18px;">compoSku1</div>
<div class="abs" style="left:926.44px;top:273.00px;font-size:8.1px;line-height:1;letter-spacing:0.194px;color:#30353d;white-space:nowrap;-webkit-text-stroke:.18px;">417</div>
<div class="row" style="top:285.98px;background:#fff"></div>
<div class="abs" style="left:385.65px;top:292.00px;font-size:8.1px;line-height:1;letter-spacing:0.000px;color:#30353d;white-space:nowrap;-webkit-text-stroke:.18px;">9</div>
<div class="abs" style="left:412.60px;top:292.00px;font-size:8.1px;line-height:1;letter-spacing:0.049px;color:#30353d;white-space:nowrap;-webkit-text-stroke:.18px;">Available</div>
<div class="abs" style="left:485.75px;top:292.00px;font-size:8.1px;line-height:1;letter-spacing:0.074px;color:#30353d;white-space:nowrap;-webkit-text-stroke:.18px;">May 02 2024, 12:19:11 AM</div>
<div class="abs" style="left:610.00px;top:292.00px;font-size:8.1px;line-height:1;letter-spacing:0.163px;color:#30353d;white-space:nowrap;-webkit-text-stroke:.18px;">69945</div>
<div class="abs" style="left:695.39px;top:292.00px;font-size:8.1px;line-height:1;letter-spacing:0.161px;color:#30353d;white-space:nowrap;-webkit-text-stroke:.18px;">13507</div>
<div class="abs" style="left:768.28px;top:292.00px;font-size:8.1px;line-height:1;letter-spacing:0.142px;color:#30353d;white-space:nowrap;-webkit-text-stroke:.18px;">ctest 1531 p</div>
<div class="abs" style="left:842.28px;top:292.00px;font-size:8.1px;line-height:1;letter-spacing:0.153px;color:#30353d;white-space:nowrap;-webkit-text-stroke:.18px;">compoSku1</div>
<div class="abs" style="left:926.44px;top:292.00px;font-size:8.1px;line-height:1;letter-spacing:0.195px;color:#30353d;white-space:nowrap;-webkit-text-stroke:.18px;">416</div>
<div class="row" style="top:304.69px;background:#f4f4f5"></div>
<div class="abs" style="left:383.24px;top:311.00px;font-size:8.1px;line-height:1;letter-spacing:0.000px;color:#30353d;white-space:nowrap;-webkit-text-stroke:.18px;">10</div>
<div class="abs" style="left:412.60px;top:311.00px;font-size:8.1px;line-height:1;letter-spacing:0.049px;color:#30353d;white-space:nowrap;-webkit-text-stroke:.18px;">Available</div>
<div class="abs" style="left:486.40px;top:311.00px;font-size:8.1px;line-height:1;letter-spacing:0.065px;color:#30353d;white-space:nowrap;-webkit-text-stroke:.18px;">Apr 11 2024, 12:15:36 AM</div>
<div class="abs" style="left:610.00px;top:311.00px;font-size:8.1px;line-height:1;letter-spacing:0.163px;color:#30353d;white-space:nowrap;-webkit-text-stroke:.18px;">69798</div>
<div class="abs" style="left:695.39px;top:311.00px;font-size:8.1px;line-height:1;letter-spacing:0.162px;color:#30353d;white-space:nowrap;-webkit-text-stroke:.18px;">13428</div>
<div class="abs" style="left:768.28px;top:311.00px;font-size:8.1px;line-height:1;letter-spacing:0.142px;color:#30353d;white-space:nowrap;-webkit-text-stroke:.18px;">ctest 1531 p</div>
<div class="abs" style="left:842.40px;top:311.00px;font-size:8.1px;line-height:1;letter-spacing:0.333px;color:#30353d;white-space:nowrap;-webkit-text-stroke:.18px;">skulots</div>
<div class="row" style="top:323.40px;background:#fff"></div>
<div class="abs" style="left:383.59px;top:329.00px;font-size:8.1px;line-height:1;letter-spacing:0.000px;color:#30353d;white-space:nowrap;-webkit-text-stroke:.18px;">11</div>
<div class="abs" style="left:412.60px;top:329.00px;font-size:8.1px;line-height:1;letter-spacing:0.049px;color:#30353d;white-space:nowrap;-webkit-text-stroke:.18px;">Available</div>
<div class="abs" style="left:486.40px;top:329.00px;font-size:8.1px;line-height:1;letter-spacing:0.065px;color:#30353d;white-space:nowrap;-webkit-text-stroke:.18px;">Apr 11 2024, 12:14:54 AM</div>
<div class="abs" style="left:610.00px;top:329.00px;font-size:8.1px;line-height:1;letter-spacing:0.163px;color:#30353d;white-space:nowrap;-webkit-text-stroke:.18px;">69797</div>
<div class="abs" style="left:695.39px;top:329.00px;font-size:8.1px;line-height:1;letter-spacing:0.161px;color:#30353d;white-space:nowrap;-webkit-text-stroke:.18px;">13427</div>
<div class="abs" style="left:768.28px;top:329.00px;font-size:8.1px;line-height:1;letter-spacing:0.142px;color:#30353d;white-space:nowrap;-webkit-text-stroke:.18px;">ctest 1531 p</div>
<div class="abs" style="left:842.40px;top:329.00px;font-size:8.1px;line-height:1;letter-spacing:0.333px;color:#30353d;white-space:nowrap;-webkit-text-stroke:.18px;">skulots</div>
<div class="row" style="top:342.11px;background:#f4f4f5"></div>
<div class="abs" style="left:383.30px;top:348.00px;font-size:8.1px;line-height:1;letter-spacing:0.000px;color:#30353d;white-space:nowrap;-webkit-text-stroke:.18px;">12</div>
<div class="abs" style="left:412.60px;top:348.00px;font-size:8.1px;line-height:1;letter-spacing:0.049px;color:#30353d;white-space:nowrap;-webkit-text-stroke:.18px;">Available</div>
<div class="abs" style="left:486.40px;top:348.00px;font-size:8.1px;line-height:1;letter-spacing:0.065px;color:#30353d;white-space:nowrap;-webkit-text-stroke:.18px;">Apr 11 2024, 12:12:00 AM</div>
<div class="abs" style="left:610.00px;top:348.00px;font-size:8.1px;line-height:1;letter-spacing:0.163px;color:#30353d;white-space:nowrap;-webkit-text-stroke:.18px;">69796</div>
<div class="abs" style="left:695.39px;top:348.00px;font-size:8.1px;line-height:1;letter-spacing:0.162px;color:#30353d;white-space:nowrap;-webkit-text-stroke:.18px;">13426</div>
<div class="abs" style="left:768.28px;top:348.00px;font-size:8.1px;line-height:1;letter-spacing:0.142px;color:#30353d;white-space:nowrap;-webkit-text-stroke:.18px;">ctest 1531 p</div>
<div class="abs" style="left:842.40px;top:348.00px;font-size:8.1px;line-height:1;letter-spacing:0.333px;color:#30353d;white-space:nowrap;-webkit-text-stroke:.18px;">skulots</div>
<div class="row" style="top:360.82px;background:#fff"></div>
<div class="abs" style="left:383.26px;top:367.00px;font-size:8.1px;line-height:1;letter-spacing:-0.000px;color:#30353d;white-space:nowrap;-webkit-text-stroke:.18px;">13</div>
<div class="abs" style="left:412.60px;top:367.00px;font-size:8.1px;line-height:1;letter-spacing:0.049px;color:#30353d;white-space:nowrap;-webkit-text-stroke:.18px;">Available</div>
<div class="abs" style="left:486.40px;top:367.00px;font-size:8.1px;line-height:1;letter-spacing:0.045px;color:#30353d;white-space:nowrap;-webkit-text-stroke:.18px;">Apr 10 2024, 11:48:23 PM</div>
<div class="abs" style="left:610.00px;top:367.00px;font-size:8.1px;line-height:1;letter-spacing:0.163px;color:#30353d;white-space:nowrap;-webkit-text-stroke:.18px;">69795</div>
<div class="abs" style="left:695.39px;top:367.00px;font-size:8.1px;line-height:1;letter-spacing:0.162px;color:#30353d;white-space:nowrap;-webkit-text-stroke:.18px;">13425</div>
<div class="abs" style="left:768.28px;top:367.00px;font-size:8.1px;line-height:1;letter-spacing:0.142px;color:#30353d;white-space:nowrap;-webkit-text-stroke:.18px;">ctest 1531 p</div>
<div class="abs" style="left:842.40px;top:367.00px;font-size:8.1px;line-height:1;letter-spacing:0.333px;color:#30353d;white-space:nowrap;-webkit-text-stroke:.18px;">skulots</div>
<div class="abs" style="left:926.44px;top:367.00px;font-size:8.1px;line-height:1;letter-spacing:0.195px;color:#30353d;white-space:nowrap;-webkit-text-stroke:.18px;">415</div>
<div class="row" style="top:379.53px;background:#f4f4f5"></div>
<div class="abs" style="left:383.20px;top:385.00px;font-size:8.1px;line-height:1;letter-spacing:0.000px;color:#30353d;white-space:nowrap;-webkit-text-stroke:.18px;">14</div>
<div class="abs" style="left:412.60px;top:385.00px;font-size:8.1px;line-height:1;letter-spacing:0.049px;color:#30353d;white-space:nowrap;-webkit-text-stroke:.18px;">Available</div>
<div class="abs" style="left:486.40px;top:385.00px;font-size:8.1px;line-height:1;letter-spacing:0.040px;color:#30353d;white-space:nowrap;-webkit-text-stroke:.18px;">Apr 04 2024, 12:31:00 AM</div>
<div class="abs" style="left:610.00px;top:385.00px;font-size:8.1px;line-height:1;letter-spacing:0.163px;color:#30353d;white-space:nowrap;-webkit-text-stroke:.18px;">69735</div>
<div class="abs" style="left:695.39px;top:385.00px;font-size:8.1px;line-height:1;letter-spacing:0.162px;color:#30353d;white-space:nowrap;-webkit-text-stroke:.18px;">13308</div>
<div class="abs" style="left:768.28px;top:385.00px;font-size:8.1px;line-height:1;letter-spacing:0.142px;color:#30353d;white-space:nowrap;-webkit-text-stroke:.18px;">ctest 1531 p</div>
<div class="abs" style="left:842.40px;top:385.00px;font-size:8.1px;line-height:1;letter-spacing:0.333px;color:#30353d;white-space:nowrap;-webkit-text-stroke:.18px;">skulots</div>
<div class="row" style="top:398.24px;background:#fff"></div>
<div class="abs" style="left:383.26px;top:404.00px;font-size:8.1px;line-height:1;letter-spacing:-0.000px;color:#30353d;white-space:nowrap;-webkit-text-stroke:.18px;">15</div>
<div class="abs" style="left:412.60px;top:404.00px;font-size:8.1px;line-height:1;letter-spacing:0.049px;color:#30353d;white-space:nowrap;-webkit-text-stroke:.18px;">Available</div>
<div class="abs" style="left:485.75px;top:404.00px;font-size:8.1px;line-height:1;letter-spacing:0.084px;color:#30353d;white-space:nowrap;-webkit-text-stroke:.18px;">Mar 28 2024, 12:36:12 AM</div>
<div class="abs" style="left:610.00px;top:404.00px;font-size:8.1px;line-height:1;letter-spacing:0.163px;color:#30353d;white-space:nowrap;-webkit-text-stroke:.18px;">69586</div>
<div class="abs" style="left:695.39px;top:404.00px;font-size:8.1px;line-height:1;letter-spacing:0.161px;color:#30353d;white-space:nowrap;-webkit-text-stroke:.18px;">13222</div>
<div class="abs" style="left:768.28px;top:404.00px;font-size:8.1px;line-height:1;letter-spacing:0.142px;color:#30353d;white-space:nowrap;-webkit-text-stroke:.18px;">ctest 1531 p</div>
<div class="abs" style="left:842.40px;top:404.00px;font-size:8.1px;line-height:1;letter-spacing:0.333px;color:#30353d;white-space:nowrap;-webkit-text-stroke:.18px;">skulots</div>
<div class="row" style="top:416.95px;background:#f4f4f5"></div>
<div class="abs" style="left:383.26px;top:423.00px;font-size:8.1px;line-height:1;letter-spacing:-0.000px;color:#30353d;white-space:nowrap;-webkit-text-stroke:.18px;">16</div>
<div class="abs" style="left:412.60px;top:423.00px;font-size:8.1px;line-height:1;letter-spacing:0.049px;color:#30353d;white-space:nowrap;-webkit-text-stroke:.18px;">Available</div>
<div class="abs" style="left:485.75px;top:423.00px;font-size:8.1px;line-height:1;letter-spacing:0.084px;color:#30353d;white-space:nowrap;-webkit-text-stroke:.18px;">Mar 28 2024, 12:32:00 AM</div>
<div class="abs" style="left:610.00px;top:423.00px;font-size:8.1px;line-height:1;letter-spacing:0.163px;color:#30353d;white-space:nowrap;-webkit-text-stroke:.18px;">69585</div>
<div class="abs" style="left:695.39px;top:423.00px;font-size:8.1px;line-height:1;letter-spacing:0.162px;color:#30353d;white-space:nowrap;-webkit-text-stroke:.18px;">13221</div>
<div class="abs" style="left:768.28px;top:423.00px;font-size:8.1px;line-height:1;letter-spacing:0.142px;color:#30353d;white-space:nowrap;-webkit-text-stroke:.18px;">ctest 1531 p</div>
<div class="abs" style="left:842.40px;top:423.00px;font-size:8.1px;line-height:1;letter-spacing:0.333px;color:#30353d;white-space:nowrap;-webkit-text-stroke:.18px;">skulots</div>
<div class="abs" style="left:368px;top:435.7px;width:618.6px;height:1px;background:#e9eaec;"></div>
<div class="abs" style="left:368px;top:436.8px;width:618.6px;height:6.4px;background:#fff;border-radius:0 0 3px 3px"></div>
<div class="abs" style="left:0;top:428px;width:1000px;height:22px;background:linear-gradient(rgba(0,0,0,0),rgba(0,0,0,.03) 60%,rgba(0,0,0,.085))"></div>
<svg class="abs" style="left:0px;top:444.5px;width:5.5px;height:5.5px" viewBox="0 0 5.500 5.500"><path d="M0 0V5.500H5.500A5.500 5.500 0 0 1 0 0z" fill="#000"/></svg>
<svg class="abs" style="left:994.5px;top:444.5px;width:5.5px;height:5.5px" viewBox="0 0 5.500 5.500"><path d="M5.500 0V5.500H0A5.500 5.500 0 0 0 5.500 0z" fill="#000"/></svg>
</div>
</body></html>
